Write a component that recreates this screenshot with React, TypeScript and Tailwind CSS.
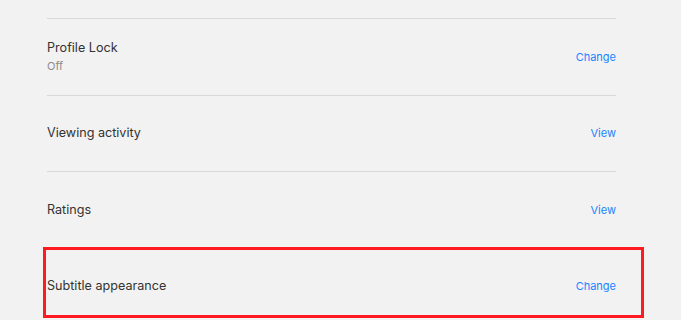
const rows = [
  { title: "Profile Lock", sub: "Off", action: "Change" },
  { title: "Viewing activity", action: "View" },
  { title: "Ratings", action: "View" },
  { title: "Subtitle appearance", action: "Change", highlight: true },
];

export default function App() {
  return (
    <div
      className="w-[681px] h-[320px] overflow-hidden bg-[#f2f2f2] pt-[18px]"
      style={{ fontFamily: "Inter, 'Liberation Sans', Arial, sans-serif" }}
    >
      <div className="ml-[47px] w-[569px]">
        {rows.map((row) => (
          <div
            key={row.title}
            className="relative flex h-[76.5px] items-center justify-between border-t border-[#d9d9d9]"
          >
            <div>
              <div className="text-[12.6px] leading-[18px] text-[#333]">{row.title}</div>
              {row.sub && (
                <div className="mt-[2px] text-[11px] leading-[15px] text-[#8c8c8c]">{row.sub}</div>
              )}
            </div>
            <a className="text-[11px] text-[#1a85ff]">{row.action}</a>
            {row.highlight && (
              <div className="pointer-events-none absolute left-[-4px] top-[-1.5px] h-[71px] w-[601px] border-[3px] border-[#ff1a22]" />
            )}
          </div>
        ))}
      </div>
    </div>
  );
}
